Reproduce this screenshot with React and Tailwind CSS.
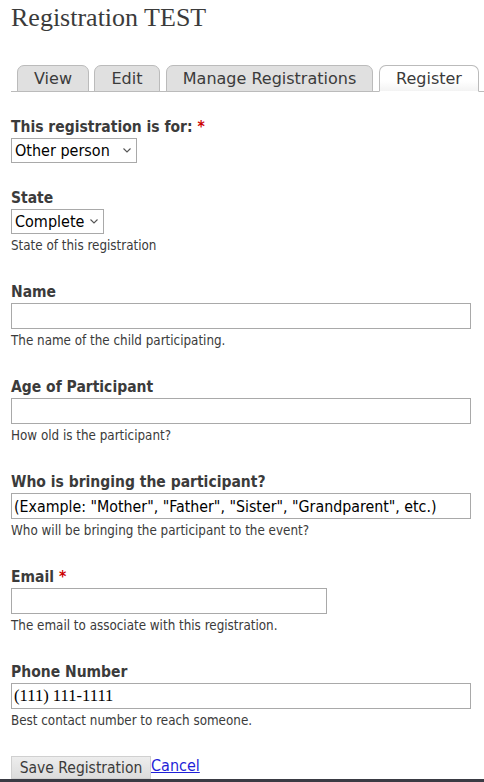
import React from 'react'

const tabs = [
  { label: 'View', w: 'w-[72px]' },
  { label: 'Edit', w: 'w-[66px]' },
  { label: 'Manage Registrations', w: 'w-[207px]' },
  { label: 'Register', w: 'w-[100px]', active: true },
]

function cn(...a) {
  return a.filter(Boolean).join(' ')
}

function Chevron() {
  return (
    <svg width="8" height="5" viewBox="0 0 8 5" className="shrink-0">
      <path d="M0.5 0.5 L4 4 L7.5 0.5" fill="none" stroke="#555" strokeWidth="1.1" />
    </svg>
  )
}

function Select({ value, w }) {
  return (
    <div className={`flex h-[25px] items-center border border-[#a9a9a9] bg-white pl-[3px] pr-[5px] ${w}`}>
      <span className="flex-1 text-[16px] leading-[20px] text-black">{value}</span>
      <Chevron />
    </div>
  )
}

function TextInput({ value = '', w = 'w-[460px]', serif }) {
  return (
    <input
      readOnly
      defaultValue={value}
      className={cn(
        'block h-[26px] border border-[#a9a9a9] bg-white px-[2px] text-black outline-none',
        w,
        serif ? "font-['Liberation_Serif',serif] text-[16.6px]" : 'text-[15.8px]'
      )}
    />
  )
}

function Item({ label, required, desc, mt = 'mt-[28px]', children }) {
  return (
    <div className={mt}>
      <label className="block pt-px text-[15.5px] leading-[19px] font-bold text-[#3b3b3b]">
        {label}
        {required && <span className="text-[#cc0000]"> *</span>}
      </label>
      <div className="mt-[1px]">{children}</div>
      {desc && <p className="mt-[3px] text-[13.3px] leading-[17px] text-[#3b3b3b]">{desc}</p>}
    </div>
  )
}

export default function App() {
  return (
    <div className="min-h-[782px] overflow-hidden bg-white font-['DejaVu_Sans_Condensed','DejaVu_Sans',sans-serif] text-[#3b3b3b]">
      <div className="pl-[11px]">
        <h1 className="pt-[3px] font-['Liberation_Serif',serif] text-[26px] leading-[30px] font-normal text-[#3b3b3b]">
          Registration TEST
        </h1>

        <ul className="mt-[32px] flex h-[27px] items-end gap-[6px] border-b border-[#bbbbbb] pl-[6px] font-['DejaVu_Sans',sans-serif]">
          {tabs.map((t, i) => (
            <li
              key={t.label}
              className={cn(
                '-mb-px flex h-[27px] items-center justify-center rounded-t-[7px] border border-[#bbbbbb] text-[16px] leading-[20px] text-[#3b3b3b]',
                t.w,
                i === 1 && '-ml-px',
                t.active ? 'border-b-white bg-gradient-to-b from-white from-60% to-[#f3f3f3]' : 'bg-[#e0e0e0]'
              )}
            >
              {t.label}
            </li>
          ))}
        </ul>

        <form onSubmit={(e) => e.preventDefault()}>
          <Item label="This registration is for:" required mt="mt-[25px]">
            <Select value="Other person" w="w-[126px]" />
          </Item>

          <Item label="State" desc="State of this registration" mt="mt-[25px]">
            <Select value="Complete" w="w-[93px]" />
          </Item>

          <Item label="Name" desc="The name of the child participating.">
            <TextInput />
          </Item>

          <Item label="Age of Participant" desc="How old is the participant?">
            <TextInput />
          </Item>

          <Item label="Who is bringing the participant?" desc="Who will be bringing the participant to the event?">
            <TextInput value={'(Example: "Mother", "Father", "Sister", "Grandparent", etc.)'} />
          </Item>

          <Item label="Email" required desc="The email to associate with this registration.">
            <TextInput w="w-[316px]" />
          </Item>

          <Item label="Phone Number" desc="Best contact number to reach someone.">
            <TextInput value="(111) 111-1111" serif />
          </Item>

          <div className="mt-[27px] flex items-start">
            <button
              type="submit"
              className="h-[23px] w-[140px] border border-[#d0d0d0] bg-gradient-to-b from-[#ededed] to-[#dcdcdc] text-[15.5px] leading-[20px] text-[#3b3b3b]"
            >
              Save Registration
            </button>
            <a href="#" className="text-[16px] leading-[20px] text-[#1f1fd8] underline">
              Cancel
            </a>
          </div>
        </form>
      </div>
      <div className="h-[40px] bg-[#3a3b44]" />
    </div>
  )
}
